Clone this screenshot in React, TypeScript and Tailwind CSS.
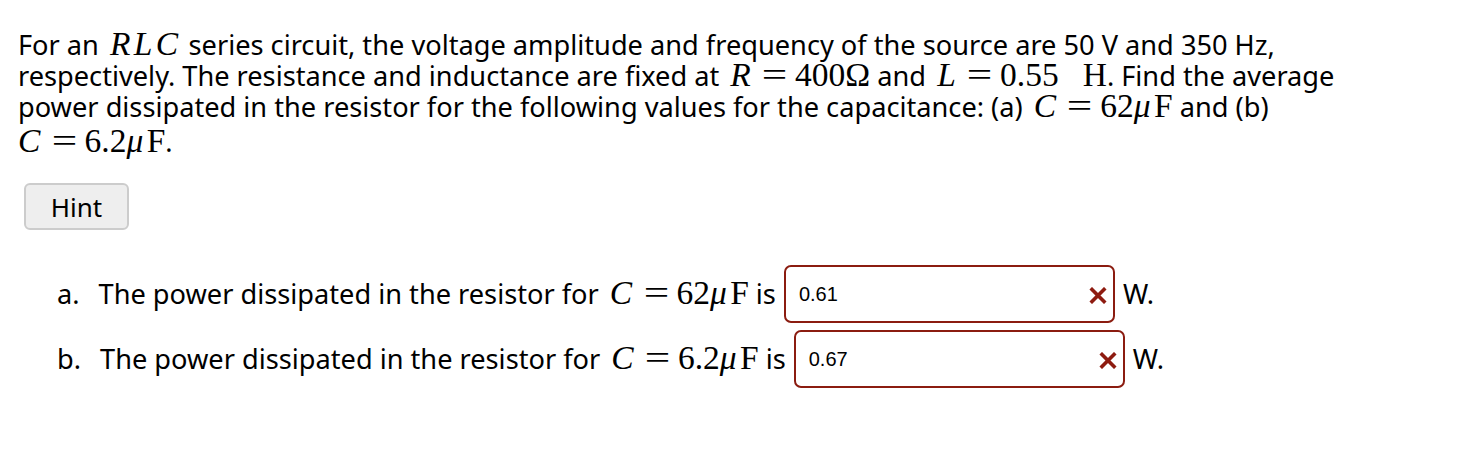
import React from 'react'

const serif = { fontFamily: '"Liberation Serif", "DejaVu Serif", serif' }

const M = ({ children }: { children: React.ReactNode }) => (
  <span className="text-[33.5px] leading-[0px] whitespace-nowrap ml-[4px]" style={serif}>
    {children}
  </span>
)
const V = ({ children }: { children: React.ReactNode }) => <i className="tracking-[0.1em]">{children}</i>
const Eq = () => <span className="inline-block mx-[11px] scale-x-[1.35]">=</span>

function Answer({ label, math, value, w }: { label: string; math: React.ReactNode; value: string; w: string }) {
  return (
    <div className="flex items-center">
      <span>{label}</span>
      <span className="ml-[19px]">The power dissipated in the resistor for {math} is</span>
      <div className={`ml-[8px] relative ${w} h-[58px] border-2 border-[#8b1c10] rounded-[7px] flex items-center`}>
        <span className="pl-[13px] text-[20px]" style={{ fontFamily: '"Liberation Sans", Arial, sans-serif' }}>
          {value}
        </span>
        <svg className="absolute right-[6px] top-[20px]" width="18" height="17" viewBox="0 0 18 17">
          <path d="M3 2.5 L15 14.5 M15 2.5 L3 14.5" stroke="#8e1b10" strokeWidth="3.6" strokeLinecap="square" />
        </svg>
      </div>
      <span className="ml-[8px]">W.</span>
    </div>
  )
}

export default function App() {
  return (
    <div className="bg-white w-[1474px] h-[454px] text-black text-[27.2px]" style={{ fontFamily: '"Noto Sans", "Open Sans", sans-serif' }}>
      <div className="pt-[29px] pl-[18px] leading-[31px]">
        <p className="whitespace-nowrap">
          For an <M><V>RLC</V></M> series circuit, the voltage amplitude and frequency of the source are 50 V and 350 Hz,
          <br />
          respectively. The resistance and inductance are fixed at <M><V>R</V><Eq />400Ω</M> and{' '}
          <M><V>L</V><Eq />0.55<span className="inline-block w-[24px]" />H</M>. Find the average
          <br />
          power dissipated in the resistor for the following values for the capacitance: (a) <M><V>C</V><Eq />62<V>μ</V>F</M> and (b)
          <br />
          <span className="inline-block mt-[4px] -ml-[4px]">
            <M><V>C</V><Eq />6.2<V>μ</V>F</M>.
          </span>
        </p>
      </div>
      <div className="pl-[24px] mt-[26px]">
        <button className="w-[105px] h-[47px] bg-[#eeeeee] border-2 border-[#cccccc] rounded-[6px] text-[26px] leading-none">Hint</button>
      </div>
      <div className="mt-[35px] pl-[57px] flex flex-col gap-[7px]">
        <Answer label="a." math={<M><V>C</V><Eq />62<V>μ</V>F</M>} value="0.61" w="w-[331px]" />
        <Answer label="b." math={<M><V>C</V><Eq />6.2<V>μ</V>F</M>} value="0.67" w="w-[331px]" />
      </div>
    </div>
  )
}
